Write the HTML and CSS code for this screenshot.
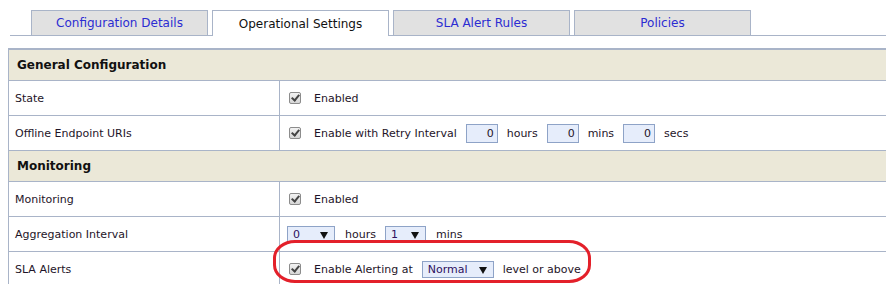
FILE: index.html
```html
<!DOCTYPE html>
<html lang="en">

<head>
    <meta charset="UTF-8">
    <title>Operational Settings</title>
    <link rel="stylesheet" href="styles.css">
</head>

<body>
    <!-- Tabs -->
    <div class="tabbar">
        <a class="tab">Configuration Details</a>
        <a class="tab active">Operational Settings</a>
        <a class="tab">SLA Alert Rules</a>
        <a class="tab">Policies</a>
    </div>

    <!-- Settings table -->
    <table class="settings">
        <tr class="section">
            <td colspan="2">General Configuration</td>
        </tr>
        <tr>
            <td class="label">State</td>
            <td><div class="field"><span class="check"></span>Enabled</div></td>
        </tr>
        <tr>
            <td class="label">Offline Endpoint URIs</td>
            <td>
                <div class="field">
                    <span class="check"></span>Enable with Retry Interval
                    <span class="num">0</span>hours
                    <span class="num">0</span>mins
                    <span class="num">0</span>secs
                </div>
            </td>
        </tr>
        <tr class="section">
            <td colspan="2">Monitoring</td>
        </tr>
        <tr>
            <td class="label">Monitoring</td>
            <td><div class="field"><span class="check"></span>Enabled</div></td>
        </tr>
        <tr>
            <td class="label">Aggregation Interval</td>
            <td>
                <div class="field">
                    <span class="sel sel-hours">0</span>hours
                    <span class="sel sel-mins">1</span>mins
                </div>
            </td>
        </tr>
        <tr>
            <td class="label">SLA Alerts</td>
            <td>
                <div class="field">
                    <span class="check"></span>Enable Alerting at
                    <span class="sel sel-level">Normal</span>level or above
                </div>
            </td>
        </tr>
    </table>

    <!-- red highlight drawn over the SLA row -->
    <div class="highlight"></div>
</body>

</html>
```

FILE: styles.css
```css
/* General styling */
body {
    margin: 0;
    font-family: "DejaVu Sans", sans-serif;
    font-size: 11px;
    color: #1e1428;
    background-color: #fff;
    overflow: hidden;
}

/* Tabs */
.tabbar {
    display: flex;
    gap: 4px;
    height: 25px;
    margin: 10px 0 0 10px;
    padding-left: 21px;
    border-bottom: 1px solid #a9b4c8;
}

.tab {
    box-sizing: border-box;
    width: 177px;
    height: 25px;
    display: flex;
    align-items: center;
    justify-content: center;
    border: 1px solid #a9b4c8;
    border-bottom: none;
    background-color: #e1e1e1;
    color: #2c2cd2;
    font-size: 12px;
}

.tab.active {
    height: 26px;
    background-color: #fff;
    color: #111;
}

/* Table */
.settings {
    width: 900px;
    margin: 12px 0 0 8px;
    border-collapse: collapse;
    border-top: 2px solid #a9b4c8;
    border-left: 1px solid #a9b4c8;
}

.settings td {
    height: 34px;
    padding: 0 7px;
    border-bottom: 1px solid #a9b4c8;
}

.settings td.label {
    width: 257px;
    padding-left: 6px;
    border-right: 1px solid #a9b4c8;
}

.section td {
    height: 30px;
    padding-left: 8px;
    background-color: #ebe8d8;
    font-size: 12px;
    font-weight: bold;
    color: #111;
}

/* Form bits */
.field {
    display: flex;
    align-items: center;
    white-space: nowrap;
}

.check {
    box-sizing: border-box;
    width: 12px;
    height: 12px;
    margin: 0 13px 0 2px;
    border: 1px solid #8c8c8c;
    border-radius: 2px;
    background: linear-gradient(#f2f2f2, #d6d6d6);
    position: relative;
}

.check::after {
    content: "";
    position: absolute;
    left: 3px;
    top: 0px;
    width: 3px;
    height: 6px;
    border-right: 2px solid #444;
    border-bottom: 2px solid #444;
    transform: rotate(40deg);
}

.num {
    box-sizing: border-box;
    width: 32px;
    height: 19px;
    margin: 0 9px;
    padding-right: 3px;
    border: 1px solid #8ea3c7;
    background-color: #e6edfb;
    text-align: right;
    line-height: 17px;
}

.sel {
    box-sizing: border-box;
    height: 17px;
    margin: 0 10px 0 9px;
    padding-left: 5px;
    border: 1px solid #8ea3c7;
    background-color: #e6edfb;
    color: #2e1060;
    line-height: 15px;
    position: relative;
}

.sel::after {
    content: "";
    position: absolute;
    right: 6px;
    top: 5px;
    border-left: 4px solid transparent;
    border-right: 4px solid transparent;
    border-top: 7px solid #111;
}

.sel-hours {
    width: 48px;
    margin-left: 0;
}

.sel-mins {
    width: 41px;
}

.sel-level {
    width: 72px;
    margin-right: 9px;
}

/* Annotation */
.highlight {
    position: absolute;
    left: 273px;
    top: 240px;
    width: 318px;
    height: 43px;
    box-sizing: border-box;
    border: 3px solid #e3202a;
    border-radius: 22px / 18px;
}
```
